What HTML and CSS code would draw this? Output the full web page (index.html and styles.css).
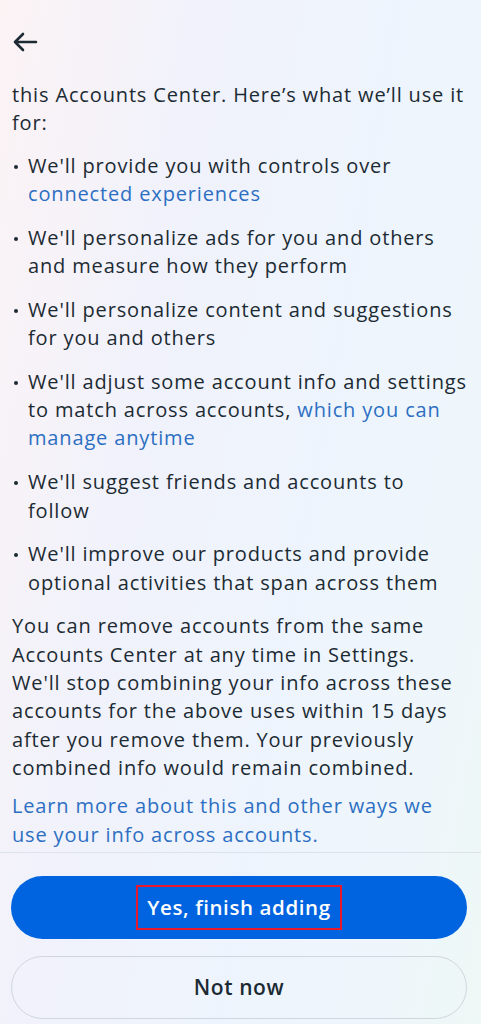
FILE: index.html
```html
<!DOCTYPE html>
<html>
<head>
<meta charset="utf-8">
<link rel="stylesheet" href="styles.css">
</head>
<body>
<div class="screen">
  <header class="topbar">
    <svg class="back" width="26" height="22" viewBox="0 0 26 22"><path d="M24 11H3M11 3L3 11L11 19" fill="none" stroke="#1c2b33" stroke-width="2.6" stroke-linecap="round" stroke-linejoin="round"/></svg>
  </header>
  <main class="content">
    <p class="intro">this Accounts Center. Here’s what we’ll use it for:</p>
    <ul class="uses">
      <li>We'll provide you with controls over <a class="link">connected experiences</a></li>
      <li>We'll personalize ads for you and others and measure how they perform</li>
      <li>We'll personalize content and suggestions for you and others</li>
      <li>We'll adjust some account info and settings to match across accounts, <a class="link">which you can manage anytime</a></li>
      <li>We'll suggest friends and accounts to follow</li>
      <li>We'll improve our products and provide optional activities that span across them</li>
    </ul>
    <p class="remove">You can remove accounts from the same Accounts Center at any time in Settings. We'll stop combining your info across these accounts for the above uses within 15 days after you remove them. Your previously combined info would remain combined.</p>
    <p class="learn"><a class="link">Learn more about this and other ways we use your info across accounts.</a></p>
  </main>
  <footer class="actions">
    <button class="btn primary"><span class="highlight">Yes, finish adding</span></button>
    <button class="btn secondary">Not now</button>
  </footer>
</div>
</body>
</html>
```
FILE: styles.css
```css
* { box-sizing: border-box; }
html, body { margin: 0; padding: 0; }
body {
  width: 481px;
  height: 1024px;
  overflow: hidden;
  font-family: "Open Sans", "Noto Sans", sans-serif;
  color: #1c2b33;
  background: linear-gradient(100deg, #fcf3f5 0%, #f1f2fb 30%, #eef4fd 60%, #eef6fb 85%, #eef8f5 100%);
}
.screen { display: flex; flex-direction: column; }
.screen > * { flex-shrink: 0; }
.topbar { height: 70px; padding: 31px 0 0 12px; }
.back { display: block; }
.content { padding: 0 12px; font-size: 20px; line-height: 28.3px; letter-spacing: 0.85px; }
.intro { margin: 11px 0 14px; }
.uses { list-style: none; margin: 0; padding: 0; }
.uses li { position: relative; padding-left: 16px; margin-bottom: 15.5px; }
.uses li::before { content: ""; position: absolute; left: 2px; top: 13px; width: 4px; height: 4px; border-radius: 50%; background: #1c2b33; }
.link { color: #2c6fc2; text-decoration: none; }
.remove { margin: 0 0 10px; }
.learn { margin: 0; }
.actions {
  margin-top: 3px;
  border-top: 1px solid #dde3ea;
  padding: 23px 14px 0 11px;
  display: flex; flex-direction: column; gap: 17px;
}
.btn {
  height: 63px; border-radius: 32px; font-family: inherit; font-size: 20.5px; font-weight: 600; letter-spacing: 0.6px;
  display: flex; align-items: center; justify-content: center; width: 100%;
}
.primary { background: #0064e0; color: #fff; border: none; }
.highlight { border: 2px solid #e8192c; padding: 3px 9px; line-height: 35px; }
.secondary { background: transparent; border: 1px solid #cfd6de; color: #1c2b33; font-size: 21px; font-weight: 600; }
```
